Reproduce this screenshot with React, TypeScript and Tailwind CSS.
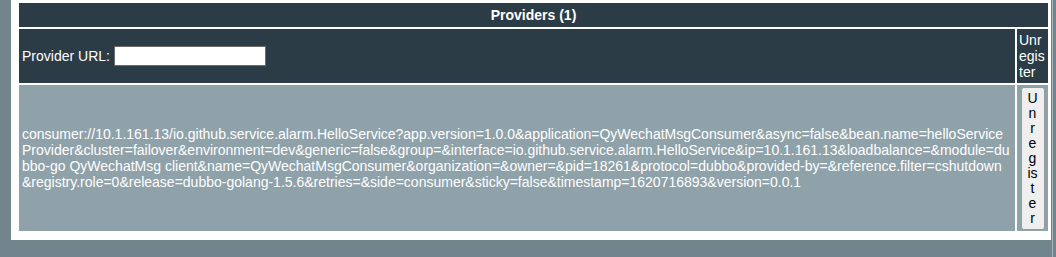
import React from "react";

const lines = [
  "consumer://10.1.161.13/io.github.service.alarm.HelloService?app.version=1.0.0&application=QyWechatMsgConsumer&async=false&bean.name=helloService",
  "Provider&cluster=failover&environment=dev&generic=false&group=&interface=io.github.service.alarm.HelloService&ip=10.1.161.13&loadbalance=&module=du",
  "bbo-go QyWechatMsg client&name=QyWechatMsgConsumer&organization=&owner=&pid=18261&protocol=dubbo&provided-by=&reference.filter=cshutdown",
  "&registry.role=0&release=dubbo-golang-1.5.6&retries=&side=consumer&sticky=false&timestamp=1620716893&version=0.0.1",
];

const btnLetters = ["U", "n", "r", "e", "g", "is", "t", "e", "r"];

export default function App() {
  return (
    <div
      className="w-[1056px] h-[257px] bg-[#72858c] flex items-start overflow-hidden"
      style={{ fontFamily: '"Liberation Sans", Arial, Helvetica, sans-serif' }}
    >
      <div className="w-[11px] shrink-0" />
      <div className="w-[1040px] shrink-0 bg-white pl-[6px] pr-[3px] pt-[1px] pb-[7px]">
        <table className="border-separate border-spacing-[2px] table-fixed w-[1031px] text-[14px] leading-[16px] text-white">
          <colgroup>
            <col className="w-[996px]" />
            <col className="w-[31px]" />
          </colgroup>
          <tbody>
            <tr>
              <td colSpan={2} className="h-[24px] bg-[#2b3c46] text-center font-bold p-0 align-middle">
                Providers (1)
              </td>
            </tr>
            <tr>
              <td className="h-[54px] bg-[#2b3c46] pl-[3px] py-0 align-middle">
                <div className="flex items-center">
                  <span>Provider URL:</span>
                  <input
                    type="text"
                    className="ml-[4px] w-[152px] h-[20px] bg-white border border-[#6b6b6b] outline-none"
                  />
                </div>
              </td>
              <td className="bg-[#2b3c46] pl-[2px] pr-0 py-0 align-middle">
                Unr
                <br />
                egis
                <br />
                ter
              </td>
            </tr>
            <tr>
              <td className="h-[146px] bg-[#8fa2aa] pl-[3px] py-0 align-middle">
                {lines.map((l, i) => (
                  <div key={i} className="whitespace-nowrap overflow-hidden">
                    {l}
                  </div>
                ))}
              </td>
              <td className="bg-[#8fa2aa] p-0 align-middle">
                <div className="flex justify-center">
                  <button className="w-[24px] bg-[#efefef] border border-[#9a9a9a] rounded-[3px] py-[3px] px-0 text-black text-[14px] leading-[15px] flex flex-col items-center">
                    {btnLetters.map((c, i) => (
                      <span key={i}>{c}</span>
                    ))}
                  </button>
                </div>
              </td>
            </tr>
          </tbody>
        </table>
      </div>
      <div className="w-[1px] shrink-0" />
      <div className="w-[1px] h-full shrink-0 bg-[#a7b5ba]" />
    </div>
  );
}
